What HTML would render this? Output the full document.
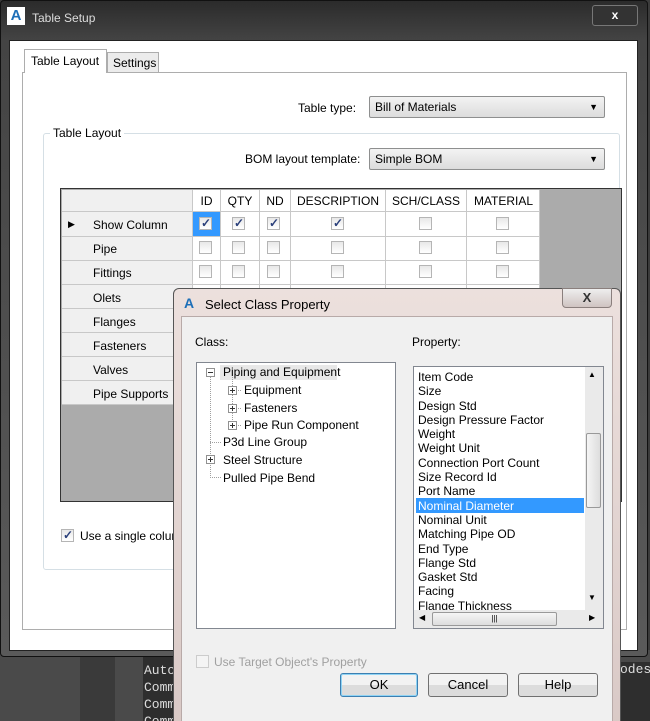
<!DOCTYPE html>
<html><head><style>
*{box-sizing:border-box;margin:0;padding:0}
html,body{width:650px;height:721px;overflow:hidden}
body{background:#3b3b3b;font-family:"Liberation Sans",sans-serif;font-size:12px;color:#000;position:relative}
.a{position:absolute}
.cb{position:absolute;width:13px;height:13px;border:1px solid #b5b5b5;background:linear-gradient(#e8e8e8,#fff)}
.ck::after{content:"✓";position:absolute;left:1px;top:-2px;font-size:12px;color:#2a3f7a;font-weight:bold}
.btn{position:absolute;height:24px;border:1px solid #707070;border-radius:3px;background:linear-gradient(#f2f2f2 50%,#dcdcdc 50%);text-align:center;line-height:22px;font-size:13px}
.dd{position:absolute;height:22px;border:1px solid #8e8f8f;border-radius:2px;background:linear-gradient(#f3f3f3,#dcdcdc);padding-left:5px;line-height:20px}
.dd::after{content:"▼";position:absolute;right:6px;top:0;font-size:9px}
</style></head><body>
<div class="a" style="left:0;top:650px;width:650px;height:71px;background:#4a4a4a"></div>
<div class="a" style="left:80px;top:650px;width:35px;height:71px;background:#3a3a3a"></div>
<div class="a" style="left:143px;top:650px;width:40px;height:71px;background:#2e2e2e"></div>
<div class="a" style="left:144px;top:662px;font-family:'Liberation Mono',monospace;font-size:13px;color:#ddd;line-height:17px">Auto<br>Comm<br>Comm<br>Comm</div>
<div class="a" style="left:618px;top:662px;width:32px;height:59px;background:#2e2e2e"></div>
<div class="a" style="left:620px;top:662px;font-family:'Liberation Mono',monospace;font-size:13px;color:#ddd">odesk</div>
<div class="a" style="left:0;top:0;width:648px;height:657px;background:linear-gradient(#2b2b2b,#444 40px,#5a5a5a);border:1px solid #111;border-radius:4px"></div>
<div class="a" style="left:7px;top:7px;width:18px;height:18px;background:#fff;color:#1d6fb8;font-weight:bold;font-size:15px;text-align:center;line-height:18px">A</div>
<div class="a" style="left:32px;top:11px;color:#ddd;font-size:12px">Table Setup</div>
<div class="a" style="left:592px;top:5px;width:46px;height:21px;border:1px solid #777;border-radius:3px;background:#333;color:#fff;font-weight:bold;text-align:center;line-height:19px">x</div>
<div class="a" style="left:9px;top:40px;width:629px;height:611px;background:#fff;border:1px solid #222"></div>
<div class="a" style="left:22px;top:72px;width:605px;height:558px;border:1px solid #adadad;background:#fff"></div>
<div class="a" style="left:24px;top:49px;width:83px;height:24px;border:1px solid #adadad;border-bottom:none;background:#fff;padding:4px 0 0 6px">Table Layout</div>
<div class="a" style="left:107px;top:52px;width:52px;height:20px;border:1px solid #adadad;border-bottom:none;background:#ececec;padding:3px 0 0 5px">Settings</div>
<div class="a" style="left:298px;top:101px">Table type:</div>
<div class="dd" style="left:369px;top:96px;width:236px">Bill of Materials</div>
<div class="a" style="left:43px;top:133px;width:577px;height:437px;border:1px solid #d5dfe5;border-radius:3px"></div>
<div class="a" style="left:50px;top:126px;background:#fff;padding:0 3px">Table Layout</div>
<div class="a" style="left:245px;top:152px">BOM layout template:</div>
<div class="dd" style="left:369px;top:148px;width:236px">Simple BOM</div>
<div class="a" style="left:60px;top:188px;width:562px;height:314px;background:#ababab;border:1px solid #333"></div>
<div class="a" style="left:62px;top:190px;width:478px;height:214px;background:#fff"></div>
<div class="a" style="left:62px;top:190px;width:130px;height:214px;background:#f0f0f0"></div>
<div class="a" style="left:68px;top:219px;font-size:9px">▶</div>
<div class="a" style="left:93px;top:213px;line-height:24.2px">Show Column<br>Pipe<br>Fittings<br>Olets<br>Flanges<br>Fasteners<br>Valves<br>Pipe Supports</div>
<svg class="a" style="left:0;top:0" width="650" height="721">
<g stroke="#c8c8c8" stroke-width="1">
<line x1="192.5" y1="190" x2="192.5" y2="404"/><line x1="220.5" y1="190" x2="220.5" y2="404"/><line x1="259.5" y1="190" x2="259.5" y2="404"/><line x1="290.5" y1="190" x2="290.5" y2="404"/><line x1="385.5" y1="190" x2="385.5" y2="404"/><line x1="466.5" y1="190" x2="466.5" y2="404"/><line x1="539.5" y1="190" x2="539.5" y2="404"/>
<line x1="62" y1="211.5" x2="540" y2="211.5"/><line x1="62" y1="236.5" x2="540" y2="236.5"/><line x1="62" y1="260.5" x2="540" y2="260.5"/><line x1="62" y1="284.5" x2="540" y2="284.5"/><line x1="62" y1="308.5" x2="540" y2="308.5"/><line x1="62" y1="332.5" x2="540" y2="332.5"/><line x1="62" y1="356.5" x2="540" y2="356.5"/><line x1="62" y1="380.5" x2="540" y2="380.5"/><line x1="62" y1="404.5" x2="540" y2="404.5"/>
</g></svg>
<div class="a" style="left:193px;top:194px;width:27px;text-align:center">ID</div>
<div class="a" style="left:221px;top:194px;width:38px;text-align:center">QTY</div>
<div class="a" style="left:260px;top:194px;width:30px;text-align:center">ND</div>
<div class="a" style="left:291px;top:194px;width:94px;text-align:center">DESCRIPTION</div>
<div class="a" style="left:386px;top:194px;width:80px;text-align:center">SCH/CLASS</div>
<div class="a" style="left:467px;top:194px;width:73px;text-align:center">MATERIAL</div>
<div class="a" style="left:193px;top:212px;width:27px;height:24px;background:#3399ff"></div>
<div class="cb ck" style="left:199px;top:217px"></div><div class="cb ck" style="left:232px;top:217px"></div><div class="cb ck" style="left:267px;top:217px"></div><div class="cb ck" style="left:331px;top:217px"></div><div class="cb" style="left:419px;top:217px"></div><div class="cb" style="left:496px;top:217px"></div>
<div class="cb" style="left:199px;top:241px"></div><div class="cb" style="left:232px;top:241px"></div><div class="cb" style="left:267px;top:241px"></div><div class="cb" style="left:331px;top:241px"></div><div class="cb" style="left:419px;top:241px"></div><div class="cb" style="left:496px;top:241px"></div>
<div class="cb" style="left:199px;top:265px"></div><div class="cb" style="left:232px;top:265px"></div><div class="cb" style="left:267px;top:265px"></div><div class="cb" style="left:331px;top:265px"></div><div class="cb" style="left:419px;top:265px"></div><div class="cb" style="left:496px;top:265px"></div>
<div class="cb ck" style="left:61px;top:529px"></div>
<div class="a" style="left:80px;top:529px">Use a single column</div>
<div class="a" style="left:173px;top:288px;width:448px;height:440px;background:linear-gradient(#ece0dd,#d9c9c6);border:1px solid #555;border-radius:6px"></div>
<div class="a" style="left:184px;top:295px;color:#1d6fb8;font-weight:bold;font-size:14px">A</div>
<div class="a" style="left:205px;top:297px;font-size:13px">Select Class Property</div>
<div class="a" style="left:562px;top:288px;width:50px;height:20px;border:1px solid #8a7f7d;border-radius:0 0 4px 4px;background:linear-gradient(#eee,#cfc3c1);text-align:center;font-size:13px;font-weight:bold;color:#333;line-height:18px">X</div>
<div class="a" style="left:181px;top:316px;width:432px;height:410px;background:#f0f0f0;border:1px solid #b8aaa8"></div>
<div class="a" style="left:195px;top:335px">Class:</div>
<div class="a" style="left:412px;top:335px">Property:</div>
<div class="a" style="left:196px;top:362px;width:200px;height:267px;background:#fff;border:1px solid #828790"></div>
<div class="a" style="left:220px;top:365px;width:117px;height:15px;background:#e8e8e8"></div>
<svg class="a" style="left:196px;top:362px" width="200" height="130"><g stroke="#a0a0a0" stroke-dasharray="1,1" fill="none"><line x1="14.5" y1="15" x2="14.5" y2="115"/><line x1="14" y1="80.5" x2="26" y2="80.5"/><line x1="14" y1="115.5" x2="26" y2="115.5"/><line x1="36.5" y1="15" x2="36.5" y2="63"/><line x1="36" y1="28.5" x2="46" y2="28.5"/><line x1="36" y1="46.5" x2="46" y2="46.5"/><line x1="36" y1="63.5" x2="46" y2="63.5"/></g>
<g fill="#fff" stroke="#919191"><rect x="10.5" y="6.5" width="8" height="8"/><rect x="32.5" y="24.5" width="8" height="8"/><rect x="32.5" y="42.5" width="8" height="8"/><rect x="32.5" y="59.5" width="8" height="8"/><rect x="10.5" y="93.5" width="8" height="8"/></g>
<g stroke="#333"><line x1="12" y1="10.5" x2="17" y2="10.5"/><line x1="34" y1="28.5" x2="39" y2="28.5"/><line x1="36.5" y1="26" x2="36.5" y2="31"/><line x1="34" y1="46.5" x2="39" y2="46.5"/><line x1="36.5" y1="44" x2="36.5" y2="49"/><line x1="34" y1="63.5" x2="39" y2="63.5"/><line x1="36.5" y1="61" x2="36.5" y2="66"/><line x1="12" y1="97.5" x2="17" y2="97.5"/><line x1="14.5" y1="95" x2="14.5" y2="100"/></g></svg>
<div class="a" style="left:223px;top:365px">Piping and Equipment</div>
<div class="a" style="left:244px;top:383px">Equipment</div>
<div class="a" style="left:244px;top:401px">Fasteners</div>
<div class="a" style="left:244px;top:418px">Pipe Run Component</div>
<div class="a" style="left:223px;top:435px">P3d Line Group</div>
<div class="a" style="left:223px;top:453px">Steel Structure</div>
<div class="a" style="left:223px;top:471px">Pulled Pipe Bend</div>
<div class="a" style="left:413px;top:366px;width:191px;height:263px;background:#fff;border:1px solid #828790;overflow:hidden">
<div class="a" style="left:2px;top:131px;width:168px;height:15px;background:#3399ff"></div>
<div class="a" style="left:4px;top:3px;line-height:14.3px;white-space:nowrap">Item Code<br>Size<br>Design Std<br>Design Pressure Factor<br>Weight<br>Weight Unit<br>Connection Port Count<br>Size Record Id<br>Port Name<br><span style="color:#fff">Nominal Diameter</span><br>Nominal Unit<br>Matching Pipe OD<br>End Type<br>Flange Std<br>Gasket Std<br>Facing<br>Flange Thickness</div>
<div class="a" style="left:171px;top:0;width:18px;height:243px;background:#eaeaea"></div>
<div class="a" style="left:174px;top:3px;font-size:8px">▲</div>
<div class="a" style="left:174px;top:226px;font-size:8px">▼</div>
<div class="a" style="left:172px;top:66px;width:15px;height:75px;background:linear-gradient(90deg,#f5f5f5,#ddd);border:1px solid #999;border-radius:2px"></div>
<div class="a" style="left:0;top:243px;width:189px;height:18px;background:#eaeaea"></div>
<div class="a" style="left:18px;top:245px;width:125px;height:14px;background:linear-gradient(#f5f5f5,#ddd);border:1px solid #999;border-radius:2px;text-align:center;font-size:8px;line-height:12px">|||</div>
<div class="a" style="left:5px;top:246px;font-size:8px">◀</div>
<div class="a" style="left:175px;top:246px;font-size:8px">▶</div>
</div>
<div class="cb" style="left:196px;top:655px;border-color:#ccc;background:#f4f4f4"></div>
<div class="a" style="left:214px;top:655px;color:#a0a0a0">Use Target Object's Property</div>
<div class="btn" style="left:340px;top:673px;width:78px;border-color:#3c7fb1;box-shadow:inset 0 0 0 1px #8fd3f4">OK</div>
<div class="btn" style="left:428px;top:673px;width:80px">Cancel</div>
<div class="btn" style="left:518px;top:673px;width:80px">Help</div>
</body></html>
